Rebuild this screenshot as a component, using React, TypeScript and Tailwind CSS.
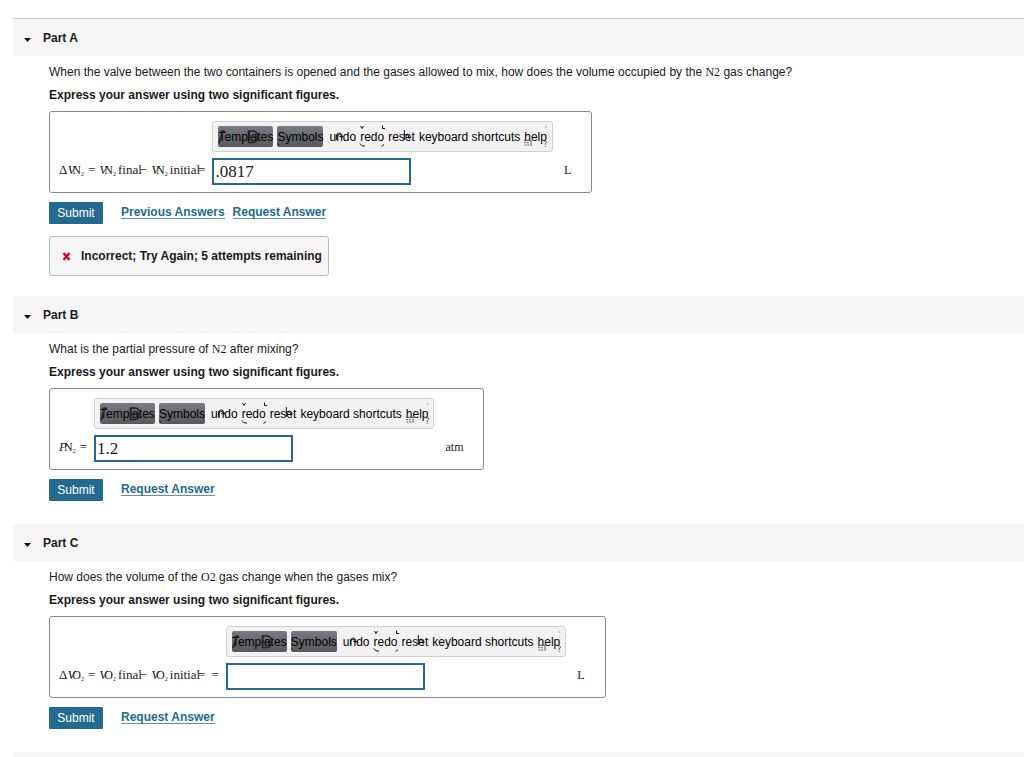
import React, { useState } from "react";

/**
 * Represents one part of the assignment.
 *
 * @property {string} title - Heading of the part, e.g. "Part A".
 * @property {React.ReactNode} question - The question, may contain inline math.
 * @property {React.ReactNode} label - Math expression in front of the answer box.
 * @property {string} unit - Unit shown behind the answer box.
 * @property {string} answer - Answer the student typed before.
 * @property {boolean} [answered] - Whether previous answers exist.
 * @property {string} [feedback] - Optional feedback shown under the buttons.
 */
interface Part {
  title: string;
  question: React.ReactNode;
  label: React.ReactNode;
  unit: string;
  answer: string;
  answered?: boolean;
  feedback?: string;
}

// Inline chemical formula, e.g. N2
const Formula = ({ symbol }: { symbol: string }) => (
  <span className="font-['Liberation_Serif',serif]">{symbol}2</span>
);

// Italic variable with a formula as its subscript
const Variable = ({ name, sub }: { name: string; sub: string }) => (
  <span className="inline-flex items-baseline">
    <i>{name}</i>
    <span className="-ml-[3px] text-xs">{sub}</span>
    <span className="-mb-1 self-end text-[6px]">2</span>
  </span>
);

const Difference = ({ sub, extra }: { sub: string; extra?: boolean }) => (
  <>
    <span>
      Δ<Variable name="V" sub={sub} />
    </span>
    <span>=</span>
    <span>
      <Variable name="V" sub={sub} />
      <span className="ml-0.5">final</span>
      <span className="-ml-0.5">−</span>
    </span>
    <span>
      <Variable name="V" sub={sub} />
      <span className="ml-0.5">initial</span>
      <span className="-ml-0.5">=</span>
    </span>
    {extra && <span className="ml-0.5">=</span>}
  </>
);

const parts: Part[] = [
  {
    title: "Part A",
    question: (
      <>
        When the valve between the two containers is opened and the gases
        allowed to mix, how does the volume occupied by the{" "}
        <Formula symbol="N" /> gas change?
      </>
    ),
    label: <Difference sub="N" />,
    unit: "L",
    answer: ".0817",
    answered: true,
    feedback: "Incorrect; Try Again; 5 attempts remaining",
  },
  {
    title: "Part B",
    question: (
      <>
        What is the partial pressure of <Formula symbol="N" /> after mixing?
      </>
    ),
    label: (
      <>
        <Variable name="P" sub="N" />
        <span>=</span>
      </>
    ),
    unit: "atm",
    answer: "1.2",
  },
  {
    title: "Part C",
    question: (
      <>
        How does the volume of the <Formula symbol="O" /> gas change when the
        gases mix?
      </>
    ),
    label: <Difference sub="O" extra />,
    unit: "L",
    answer: "",
  },
];

const iconClass = "absolute inset-0 h-full w-full overflow-visible";

const Toolbar = () => (
  <div
    role="toolbar"
    className="flex h-[31px] items-center rounded-[3px] border border-[#d0d0d0] bg-[#f2f2f2] px-[5px] text-xs text-black"
  >
    <button className="relative h-[21px] w-[55px] rounded-xs bg-linear-to-b from-[#7b7a84] to-[#58585c]">
      Templates
      <svg className={iconClass} viewBox="0 0 55 21" fill="none" stroke="#222">
        <path d="M2.500 5.500H7M4.500 6L1 17" strokeWidth="1.800" />
        <path
          d="M30.500 5V16.500H35C41 16.500 41 5 35 5ZM30.500 11H39"
          strokeWidth="1.600"
        />
      </svg>
    </button>
    <button className="relative ml-1 h-[21px] w-[46px] rounded-xs bg-linear-to-b from-[#7b7a84] to-[#58585c]">
      Symbols
      <svg className={iconClass} viewBox="0 0 46 21" fill="none" stroke="#222">
        <path d="M0 17.500L2 19" />
      </svg>
    </button>
    <button className="relative ml-1.5 h-[21px]">
      undo
      <svg className={iconClass} viewBox="0 0 27 21" fill="none" stroke="#111">
        <path d="M7.500 14V10C7.500 6 13 6 13 10V12M10.500 10.500H14" />
      </svg>
    </button>
    <button className="relative ml-1 h-[21px]">
      redo
      <svg className={iconClass} viewBox="0 0 24 21" fill="none" stroke="#111">
        <path d="M.5 0L2 2.500L3.500 0M0 17.500C1 19.500 2 20 5 20M22.500 -.5V2.500H25M21.500 20.500L24 18.500" />
      </svg>
    </button>
    <button className="relative ml-1 h-[21px]">
      reset
      <svg className={iconClass} viewBox="0 0 27 21" fill="none" stroke="#111">
        <path d="M16.500 4V14M16.500 9L20 8L21.500 13" />
      </svg>
    </button>
    <button className="relative ml-1 h-[21px]">keyboard shortcuts</button>
    <button className="relative ml-1 h-[21px]">
      help
      <svg className={iconClass} viewBox="0 0 24 21" fill="none" stroke="#555">
        <path d="M0 14.500H7.500V20.500" />
        <path d="M0 17H6M.5 19.500H6" strokeDasharray="2 1" />
        <path d="M23 0V1M21.500 15.500C25 14.500 24 17.500 22.500 18V19.500M22.500 20.500V21.500" />
      </svg>
    </button>
  </div>
);

const linkClass =
  "border-b border-[#5f94b0] text-xs leading-3 font-bold text-[#236a8f]";

const PartSection = ({ part }: { part: Part }) => {
  const [open, setOpen] = useState(true);
  const [answer, setAnswer] = useState(part.answer);
  const id = part.title.replace(" ", "-").toLowerCase();

  return (
    <section>
      <h2 className="bg-[#f6f6f6]">
        <button
          className="flex h-[37px] w-full items-center gap-3 pl-[11px] text-xs font-bold"
          aria-expanded={open}
          onClick={() => setOpen(!open)}
        >
          <svg className="mt-1 h-1 w-[7px]" viewBox="0 0 7 4">
            <path d="M0 0H7L3.500 4Z" fill="#111" />
          </svg>
          {part.title}
        </button>
      </h2>
      {open && (
        <div className="pt-2 pr-4 pb-[23px] pl-9">
          <p className="text-xs leading-4">{part.question}</p>
          <p className="mt-[7px] text-xs leading-4 font-bold">
            Express your answer using two significant figures.
          </p>
          <div className="mt-2 flex h-[82px] w-fit rounded-[3px] border border-[#888] pt-[9px] pr-5 pl-[9px]">
            <label
              htmlFor={id}
              className="mt-[41px] mr-[7px] flex h-4 items-baseline gap-1 font-['Liberation_Serif',serif] text-[13px] leading-4"
            >
              {part.label}
            </label>
            <div>
              <Toolbar />
              <input
                id={id}
                type="text"
                className="mt-1.5 block h-[27px] w-[199px] border-2 border-[#236a8f] bg-white px-px font-['Liberation_Serif',serif] text-[17px] outline-none"
                value={answer}
                onChange={(e) => setAnswer(e.target.value)}
              />
            </div>
            <span className="mt-[41px] ml-[11px] font-['Liberation_Serif',serif] text-xs leading-4">
              {part.unit}
            </span>
          </div>
          <div className="mt-[9px] flex items-start">
            <button className="mr-[18px] h-[22px] w-[54px] rounded-[1px] bg-[#236a8f] text-xs text-white">
              Submit
            </button>
            <div className="mt-1 flex gap-2">
              {part.answered && (
                <a href="#previous" className={linkClass}>
                  Previous Answers
                </a>
              )}
              <a href="#request" className={linkClass}>
                Request Answer
              </a>
            </div>
          </div>
          {part.feedback && (
            <div className="mt-3 -mb-[3px] flex h-10 w-fit items-center rounded-[3px] border border-[#bbb] bg-[#f6f6f6] pr-1.5 pl-3 text-xs font-bold">
              <svg className="mr-[10px] h-[9px] w-[9px]" viewBox="0 0 9 9">
                <path
                  d="M1.500 1L7.500 8M7.500 1L1.500 8"
                  stroke="#c8102e"
                  strokeWidth="2.500"
                />
              </svg>
              {part.feedback}
            </div>
          )}
        </div>
      )}
    </section>
  );
};

function App() {
  return (
    <main className="bg-white pt-[18px] pl-[13px] font-['Liberation_Sans',Arial,sans-serif] text-[#1a1a1a]">
      <div className="border-t border-[#ccc]">
        {parts.map((part) => (
          <PartSection key={part.title} part={part} />
        ))}
        <div className="h-1.5 bg-[#f6f6f6]" />
      </div>
    </main>
  );
}

export default App;
